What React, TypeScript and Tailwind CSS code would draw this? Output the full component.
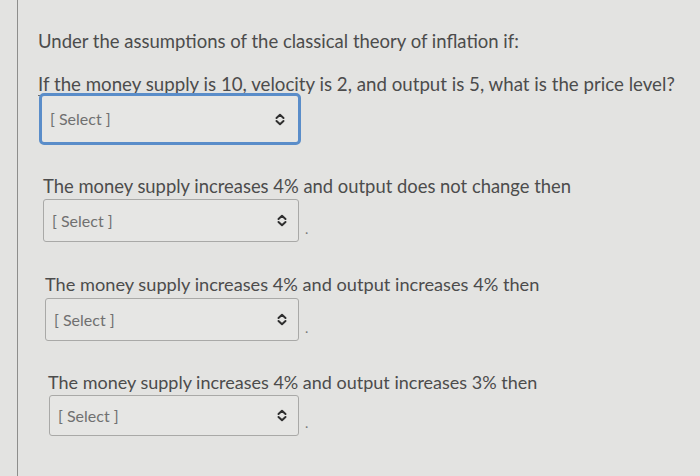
import React from "react";

function Chevron() {
  return (
    <svg width="10" height="13" viewBox="0 0 10 13" fill="none">
      <path d="M1.5 5 L5 1.8 L8.5 5" stroke="#2f2f2f" strokeWidth="2" strokeLinecap="round" strokeLinejoin="round" />
      <path d="M1.5 8 L5 11.2 L8.5 8" stroke="#2f2f2f" strokeWidth="2" strokeLinecap="round" strokeLinejoin="round" />
    </svg>
  );
}

export default function App() {
  return (
    <div
      className="w-[700px] h-[476px] overflow-hidden bg-[#e3e3e1] text-[#4c4c4c]"
      style={{ fontFamily: "Lato, 'Open Sans', sans-serif" }}
    >
      <div className="ml-[17px] h-full border-l border-[#8e8e8c] pl-[20px] flex flex-col">
        <div className="mt-[31px] h-[20px] leading-[20px] text-[18.5px] whitespace-nowrap">
          Under the assumptions of the classical theory of inflation if:
        </div>
        <div className="mt-[23px] h-[20px] leading-[20px] text-[18.7px] whitespace-nowrap">
          <span className="underline decoration-[#6b6b6b] underline-offset-[4px]">If the money supply</span> is 10, velocity is 2, and output is 5, what is the price level?
        </div>
        <div className="mt-[-1px] ml-[1px] w-[262px] h-[52px] rounded-[5px] border-[3px] border-[#5a8dc9] bg-[#e6e6e4] flex items-center justify-between pl-[8px] pr-[13px]">
          <span className="text-[16px] text-[#707070]">[ Select ]</span>
          <Chevron />
        </div>

        <div className="mt-[31px] ml-[5px] h-[20px] leading-[20px] text-[18.4px] whitespace-nowrap">
          The money supply increases 4% and output does not change then
        </div>
        <div className="mt-[3px] ml-[5px] flex items-end">
          <div className="w-[256px] h-[43px] rounded-[3px] border border-[#a9a9a7] bg-[#e6e6e4] flex items-center justify-between pl-[8px] pr-[11px]">
            <span className="text-[16px] text-[#707070]">[ Select ]</span>
            <Chevron />
          </div>
          <span className="ml-[6px] mb-[6px] text-[14px] leading-none text-[#777]">.</span>
        </div>

        <div className="mt-[32px] ml-[7px] h-[20px] leading-[20px] text-[18.2px] whitespace-nowrap">
          The money supply increases 4% and output increases 4% then
        </div>
        <div className="mt-[4px] ml-[7px] flex items-end">
          <div className="w-[254px] h-[43px] rounded-[3px] border border-[#a9a9a7] bg-[#e6e6e4] flex items-center justify-between pl-[8px] pr-[11px]">
            <span className="text-[16px] text-[#707070]">[ Select ]</span>
            <Chevron />
          </div>
          <span className="ml-[6px] mb-[6px] text-[14px] leading-none text-[#777]">.</span>
        </div>

        <div className="mt-[31px] ml-[10px] h-[20px] leading-[20px] text-[18px] whitespace-nowrap">
          The money supply increases 4% and output increases 3% then
        </div>
        <div className="mt-[3px] ml-[11px] flex items-end">
          <div className="w-[250px] h-[41px] rounded-[3px] border border-[#a9a9a7] bg-[#e6e6e4] flex items-center justify-between pl-[8px] pr-[11px]">
            <span className="text-[16px] text-[#707070]">[ Select ]</span>
            <Chevron />
          </div>
          <span className="ml-[6px] mb-[6px] text-[14px] leading-none text-[#777]">.</span>
        </div>
      </div>
    </div>
  );
}
